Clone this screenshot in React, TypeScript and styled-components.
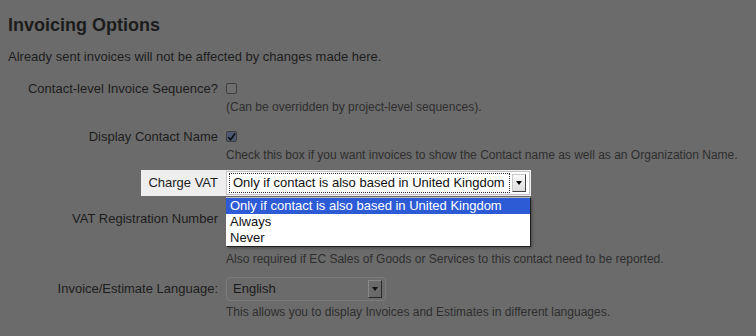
import React from 'react'
import styled, { createGlobalStyle } from 'styled-components'

const GlobalStyle = createGlobalStyle`
  html, body {
    margin: 0;
    padding: 0;
    background: #6b6b6b;
  }
  body {
    font-family: "Liberation Sans", Arial, Helvetica, sans-serif;
    font-size: 13px;
    line-height: 16px;
    color: #1d1d1d;
  }
`

const Page = styled.div`
  width: 756px;
  height: 336px;
  box-sizing: border-box;
  padding: 14px 8px 0 8px;
  overflow: hidden;
`

const Heading = styled.h2`
  margin: 0;
  font-size: 18px;
  line-height: 22px;
  font-weight: bold;
  color: #1c1c1c;
`

const Intro = styled.p`
  margin: 13px 0 0 0;
`

const Field = styled.div<{ $top: number }>`
  display: grid;
  grid-template-columns: 218px 1fr;
  align-items: start;
  margin-top: ${p => p.$top}px;
`

const Label = styled.label<{ $pad?: number; $lit?: boolean }>`
  justify-self: end;
  padding: ${p => p.$pad ?? 0}px 8px 0 ${p => (p.$lit ? 7 : 0)}px;
  background: ${p => (p.$lit ? '#eeeeee' : 'transparent')};
  color: ${p => (p.$lit ? '#222' : '#1d1d1d')};
  white-space: nowrap;
  ${p => p.$lit && 'height: 26px; box-sizing: border-box; display: flex; align-items: center;'}
`

const Control = styled.div<{ $lit?: boolean }>`
  justify-self: start;
  position: relative;
  ${p => p.$lit && 'background: #eeeeee; padding: 1px 1px 1px 0;'}
`

const Help = styled.div<{ $top?: number }>`
  font-size: 12px;
  color: #2e2e2e;
  margin-top: ${p => p.$top ?? 0}px;
  white-space: nowrap;
`

const CheckLine = styled.div`
  height: 16px;
  display: flex;
  align-items: flex-start;
`

const Check = styled.span<{ $on?: boolean }>`
  display: inline-flex;
  align-items: center;
  justify-content: center;
  width: 11px;
  height: 11px;
  box-sizing: border-box;
  margin-top: 2px;
  border: 1px solid #3e3e3e;
  border-radius: 2px;
  background: ${p => (p.$on ? '#4d5872' : '#6e6e6e')};
`

const SelectBox = styled.div<{ $w: number }>`
  width: ${p => p.$w}px;
  height: 24px;
  box-sizing: border-box;
  display: flex;
  align-items: center;
  background: #ffffff;
  border: 1px solid #c4c4c4;
  padding: 0 3px 0 2px;
  gap: 2px;
`

const SelectText = styled.span`
  flex: 1;
  height: 20px;
  box-sizing: border-box;
  border: 1px dotted #333;
  padding: 1px 0 0 3px;
  color: #111;
  white-space: nowrap;
`

const ArrowButton = styled.span<{ $dim?: boolean }>`
  width: 14px;
  height: 18px;
  box-sizing: border-box;
  display: flex;
  align-items: center;
  justify-content: center;
  background: ${p => (p.$dim ? '#6a6a6a' : 'linear-gradient(#fafafa, #dedede)')};
  border: 1px solid ${p => (p.$dim ? '#888' : '#c8c8c8')};
  border-right-color: ${p => (p.$dim ? '#2a2a2a' : '#444')};
  border-bottom-color: ${p => (p.$dim ? '#2a2a2a' : '#444')};

  &::after {
    content: '';
    width: 0;
    height: 0;
    border-left: 3px solid transparent;
    border-right: 3px solid transparent;
    border-top: 4px solid ${p => (p.$dim ? '#111' : '#000')};
  }
`

const Menu = styled.ul`
  position: absolute;
  top: calc(100% + 1px);
  left: 0;
  width: 304px;
  margin: 0;
  padding: 0;
  list-style: none;
  background: #fff;
  border-top: 1px solid #bbb;
  box-shadow: 1px 1px 0 #1e1e1e, 2px 2px 3px rgba(0, 0, 0, 0.35);
  z-index: 10;
`

const MenuItem = styled.li<{ $active?: boolean }>`
  height: 16px;
  padding-left: 4px;
  white-space: nowrap;
  background: ${p => (p.$active ? '#2d5bd6' : '#fff')};
  color: ${p => (p.$active ? '#fff' : '#111')};
`

const TextInput = styled.div`
  width: 200px;
  height: 22px;
  box-sizing: border-box;
  border: 1px solid #555;
  background: #6e6e6e;
`

const DimSelect = styled.div`
  width: 160px;
  height: 24px;
  box-sizing: border-box;
  display: flex;
  align-items: center;
  justify-content: space-between;
  border: 1px solid #7b7b7b;
  border-radius: 4px;
  padding: 0 3px 0 6px;
  color: #1a1a1a;
`

const CheckMark = () => (
  <svg width="10" height="10" viewBox="0 0 10 10">
    <path d="M1.5 5.2 L4 8 L9 1" fill="none" stroke="#0d0d0d" strokeWidth="1.8" />
  </svg>
)

const vatOptions = [
  'Only if contact is also based in United Kingdom',
  'Always',
  'Never',
]

export default function App() {
  return (
    <Page>
      <GlobalStyle />
      <Heading>Invoicing Options</Heading>
      <Intro>Already sent invoices will not be affected by changes made here.</Intro>

      <Field $top={16}>
        <Label>Contact-level Invoice Sequence?</Label>
        <Control>
          <CheckLine>
            <Check />
          </CheckLine>
          <Help $top={2}>(Can be overridden by project-level sequences).</Help>
        </Control>
      </Field>

      <Field $top={14}>
        <Label>Display Contact Name</Label>
        <Control>
          <CheckLine>
            <Check $on>
              <CheckMark />
            </Check>
          </CheckLine>
          <Help $top={2}>Check this box if you want invoices to show the Contact name as well as an Organization Name.</Help>
        </Control>
      </Field>

      <Field $top={7}>
        <Label $lit>Charge VAT</Label>
        <Control $lit>
          <SelectBox $w={304}>
            <SelectText>{vatOptions[0]}</SelectText>
            <ArrowButton />
          </SelectBox>
          <Menu>
            {vatOptions.map((o, i) => (
              <MenuItem key={o} $active={i === 0}>{o}</MenuItem>
            ))}
          </Menu>
        </Control>
      </Field>

      <Field $top={13}>
        <Label $pad={2}>VAT Registration Number</Label>
        <Control>
          <TextInput />
          <Help $top={20}>Also required if EC Sales of Goods or Services to this contact need to be reported.</Help>
        </Control>
      </Field>

      <Field $top={10}>
        <Label $pad={4}>Invoice/Estimate Language:</Label>
        <Control>
          <DimSelect>
            <span>English</span>
            <ArrowButton $dim />
          </DimSelect>
          <Help $top={3}>This allows you to display Invoices and Estimates in different languages.</Help>
        </Control>
      </Field>
    </Page>
  )
}
